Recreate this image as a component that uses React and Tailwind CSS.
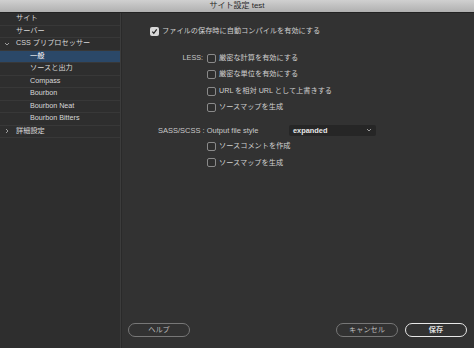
import React from "react";

const font = { fontFamily: '"Liberation Sans", "Noto Sans CJK JP", sans-serif' };

function Box({ checked }) {
  return checked ? (
    <span className="flex h-[9px] w-[9px] shrink-0 items-center justify-center rounded-[2px] bg-[#d8d8d8]">
      <svg width="7" height="7" viewBox="0 0 8 8">
        <path d="M1.5 4.2 L3.2 6 L6.5 1.6" fill="none" stroke="#222" strokeWidth="1.4" />
      </svg>
    </span>
  ) : (
    <span className="h-[9px] w-[9px] shrink-0 rounded-[2px] border border-[#8a8a8a] bg-[#2e2e2e]" />
  );
}

function Check({ label, checked }) {
  return (
    <div className="flex h-[16.3px] items-center gap-[3px]">
      <Box checked={checked} />
      <span className="text-[7.2px] text-[#d0d0d0]">{label}</span>
    </div>
  );
}

function Item({ label, level, sel, chevron }) {
  return (
    <div
      className={`relative flex h-[12.5px] items-center border-b border-[#383838] text-[7.2px] ${
        sel ? "bg-[#2b4868] text-white" : "text-[#d8d8d8]"
      }`}
    >
      {chevron && (
        <span className="absolute left-[4px] top-0 flex h-full items-center text-[#aaa]">
          {chevron === "down" ? (
            <svg width="6" height="6" viewBox="0 0 6 6"><path d="M1 2 L3 4 L5 2" fill="none" stroke="#aaa" strokeWidth="0.9" /></svg>
          ) : (
            <svg width="6" height="6" viewBox="0 0 6 6"><path d="M2 1 L4 3 L2 5" fill="none" stroke="#aaa" strokeWidth="0.9" /></svg>
          )}
        </span>
      )}
      <span className={level === 1 ? "pl-[30px]" : "pl-[16px]"}>{label}</span>
    </div>
  );
}

export default function App() {
  return (
    <div className="flex h-[348px] w-[474px] flex-col overflow-hidden bg-[#323232]" style={font}>
      <div className="flex h-[13px] shrink-0 items-center justify-center border-b border-[#222] bg-gradient-to-b from-[#d0d0d0] to-[#b0b0b0] text-[8px] text-[#2a2a2a]">
        サイト設定 test
      </div>
      <div className="flex flex-1">
        <div className="w-[121px] shrink-0 border-r border-[#3c3c3c] bg-[#2e2e2e]">
          <Item label="サイト" />
          <Item label="サーバー" />
          <Item label="CSS プリプロセッサー" chevron="down" />
          <Item label="一般" level={1} sel />
          <Item label="ソースと出力" level={1} />
          <Item label="Compass" level={1} />
          <Item label="Bourbon" level={1} />
          <Item label="Bourbon Neat" level={1} />
          <Item label="Bourbon Bitters" level={1} />
          <Item label="詳細設定" chevron="right" />
        </div>
        <div className="flex flex-1 flex-col border-l border-[#2a2a2a] pl-[6px] pr-[7px] text-[#d0d0d0]">
          <div className="ml-[22px] flex flex-col">
            <div className="mt-[10px]">
              <Check label="ファイルの保存時に自動コンパイルを有効にする" checked />
            </div>
            <div className="mt-[11px] flex">
              <div className="flex h-[16.3px] w-[57px] items-center justify-end pr-[4px] text-[7.2px] text-[#c8c8c8]">LESS:</div>
              <div className="flex flex-col">
                <Check label="厳密な計算を有効にする" />
                <Check label="厳密な単位を有効にする" />
                <Check label="URL を相対 URL として上書きする" />
                <Check label="ソースマップを生成" />
              </div>
            </div>
            <div className="mt-[9px] flex h-[12px] items-center">
              <span className="w-[139px] pl-[8px] text-[7.5px] text-[#c8c8c8]">SASS/SCSS : Output file style</span>
              <div className="flex h-[11px] w-[87px] items-center justify-between rounded-[2px] bg-[#262626] px-[4px]">
                <span className="text-[7.4px] font-bold text-[#e8e8e8]">expanded</span>
                <svg width="6" height="6" viewBox="0 0 6 6"><path d="M1 2 L3 4 L5 2" fill="none" stroke="#aaa" strokeWidth="0.9" /></svg>
              </div>
            </div>
            <div className="ml-[57px] mt-[2px] flex flex-col">
              <Check label="ソースコメントを作成" />
              <Check label="ソースマップを生成" />
            </div>
          </div>
          <div className="flex-1" />
          <div className="mb-[11px] flex items-center">
            <button className="flex h-[14px] w-[62px] items-center justify-center rounded-full border border-[#777] text-[7.2px] text-[#bbb]">ヘルプ</button>
            <div className="flex-1" />
            <button className="flex h-[14px] w-[62px] items-center justify-center rounded-full border border-[#777] text-[7.2px] text-[#bbb]">キャンセル</button>
            <button className="ml-[7px] flex h-[14px] w-[62px] items-center justify-center rounded-full border border-[#e8e8e8] text-[7.2px] font-bold text-[#ddd]">保存</button>
          </div>
        </div>
      </div>
    </div>
  );
}
